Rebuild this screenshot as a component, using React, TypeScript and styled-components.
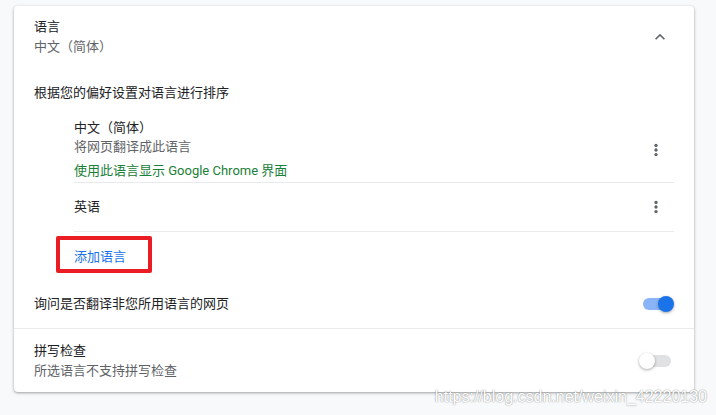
import React from "react";
import styled, { createGlobalStyle } from "styled-components";

const Global = createGlobalStyle`
  html, body { margin: 0; padding: 0; background: #f8f9fa; }
  body {
    font-family: Roboto, "Noto Sans CJK SC", sans-serif;
    font-size: 13px;
    color: #202124;
    width: 716px;
    height: 415px;
    overflow: hidden;
    position: relative;
  }
`;

const Page = styled.div`
  padding: 6px 22px 0 14px;
`;

const Card = styled.div`
  background: #fff;
  border-radius: 4px;
  box-shadow: 0 1px 2px 0 rgba(60, 64, 67, 0.3), 0 1px 3px 1px rgba(60, 64, 67, 0.15);
`;

const Header = styled.div`
  height: 62px;
  display: flex;
  align-items: center;
  padding: 0 24px 0 20px;
`;

const TextBlock = styled.div`
  flex: 1;
  display: flex;
  flex-direction: column;
`;

const Primary = styled.div`
  line-height: 20px;
  color: #202124;
`;

const Secondary = styled.div<{ $green?: boolean; $gap?: number }>`
  line-height: 20px;
  color: ${(p) => (p.$green ? "#188038" : "#5f6368")};
  margin-top: ${(p) => p.$gap ?? 0}px;
`;

const IconButton = styled.div`
  width: 20px;
  height: 20px;
  display: flex;
  align-items: center;
  justify-content: center;
  color: #5f6368;
`;

const Description = styled.div`
  height: 50px;
  display: flex;
  align-items: center;
  padding: 0 20px;
  line-height: 20px;
`;

const List = styled.div`
  padding: 0 20px 0 60px;
`;

const ListItem = styled.div<{ $h: number }>`
  min-height: ${(p) => p.$h}px;
  display: flex;
  align-items: center;
  border-bottom: 1px solid #e8eaed;
`;

const LangText = styled.div`
  flex: 1;
  display: flex;
  flex-direction: column;
`;

const ItemLine = styled.div`
  line-height: 18px;
`;

const MoreButton = styled.div`
  width: 36px;
  height: 36px;
  display: flex;
  align-items: center;
  justify-content: flex-end;
  padding-right: 8px;
  box-sizing: border-box;
  color: #5f6368;
`;

const AddRow = styled.div`
  height: 48px;
  display: flex;
  align-items: center;
`;

const AddLink = styled.span`
  position: relative;
  color: #1a73e8;
  line-height: 20px;
  margin-top: 1px;
`;

const Highlight = styled.span`
  position: absolute;
  left: -18px;
  top: -11px;
  width: 96px;
  height: 37px;
  box-sizing: border-box;
  border: 4px solid #ea1c24;
  border-radius: 2px;
  pointer-events: none;
`;

const SettingRow = styled.div<{ $h: number; $divider?: boolean }>`
  height: ${(p) => p.$h}px;
  display: flex;
  align-items: center;
  padding: 0 20px;
  border-bottom: ${(p) => (p.$divider ? "1px solid #e8eaed" : "none")};
`;

const ToggleWrap = styled.div`
  position: relative;
  width: 35px;
  height: 16px;
  flex: none;
`;

const Track = styled.div<{ $on: boolean }>`
  position: absolute;
  left: 4px;
  right: 3px;
  top: 2px;
  height: 12px;
  border-radius: 6px;
  background: ${(p) => (p.$on ? "#8ab4f8" : "#e0e1e3")};
`;

const Thumb = styled.div<{ $on: boolean }>`
  position: absolute;
  top: 0;
  ${(p) => (p.$on ? "right: 0;" : "left: 0;")}
  width: 16px;
  height: 16px;
  border-radius: 50%;
  background: ${(p) => (p.$on ? "#1a73e8" : "#ffffff")};
  box-shadow: 0 1px 3px 0 rgba(0, 0, 0, 0.35);
`;

const Watermark = styled.div`
  position: absolute;
  right: 9px;
  bottom: 10px;
  font-family: "Liberation Sans", Arial, sans-serif;
  font-size: 16px;
  line-height: 16px;
  color: #ffffff;
  text-shadow: 0 0 1px rgba(0, 0, 0, 0.35), 0 0 2px rgba(0, 0, 0, 0.25);
`;

const Toggle = ({ on }: { on: boolean }) => (
  <ToggleWrap>
    <Track $on={on} />
    <Thumb $on={on} />
  </ToggleWrap>
);

const MoreVert = () => (
  <svg width="20" height="20" viewBox="0 0 24 24" fill="currentColor">
    <circle cx="12" cy="6.5" r="2" />
    <circle cx="12" cy="12" r="2" />
    <circle cx="12" cy="17.5" r="2" />
  </svg>
);

const ChevronUp = () => (
  <svg width="20" height="20" viewBox="0 0 24 24" fill="currentColor">
    <path d="M12 8l-6 6 1.41 1.41L12 10.83l4.59 4.58L18 14z" />
  </svg>
);

export default function App() {
  return (
    <>
      <Global />
      <Page>
        <Card>
          <Header>
            <TextBlock>
              <Primary>语言</Primary>
              <Secondary>中文（简体）</Secondary>
            </TextBlock>
            <IconButton>
              <ChevronUp />
            </IconButton>
          </Header>
          <Description>根据您的偏好设置对语言进行排序</Description>
          <List>
            <ListItem $h={64}>
              <LangText>
                <ItemLine>中文（简体）</ItemLine>
                <Secondary>将网页翻译成此语言</Secondary>
                <Secondary $green $gap={4}>
                  使用此语言显示 Google Chrome 界面
                </Secondary>
              </LangText>
              <MoreButton>
                <MoreVert />
              </MoreButton>
            </ListItem>
            <ListItem $h={48}>
              <LangText>
                <ItemLine>英语</ItemLine>
              </LangText>
              <MoreButton>
                <MoreVert />
              </MoreButton>
            </ListItem>
            <AddRow>
              <AddLink>
                添加语言
                <Highlight />
              </AddLink>
            </AddRow>
          </List>
          <SettingRow $h={48} $divider>
            <TextBlock>
              <Primary>询问是否翻译非您所用语言的网页</Primary>
            </TextBlock>
            <Toggle on />
          </SettingRow>
          <SettingRow $h={63}>
            <TextBlock>
              <Primary>拼写检查</Primary>
              <Secondary>所选语言不支持拼写检查</Secondary>
            </TextBlock>
            <Toggle on={false} />
          </SettingRow>
        </Card>
      </Page>
      <Watermark>https://blog.csdn.net/weixin_42220130</Watermark>
    </>
  );
}
